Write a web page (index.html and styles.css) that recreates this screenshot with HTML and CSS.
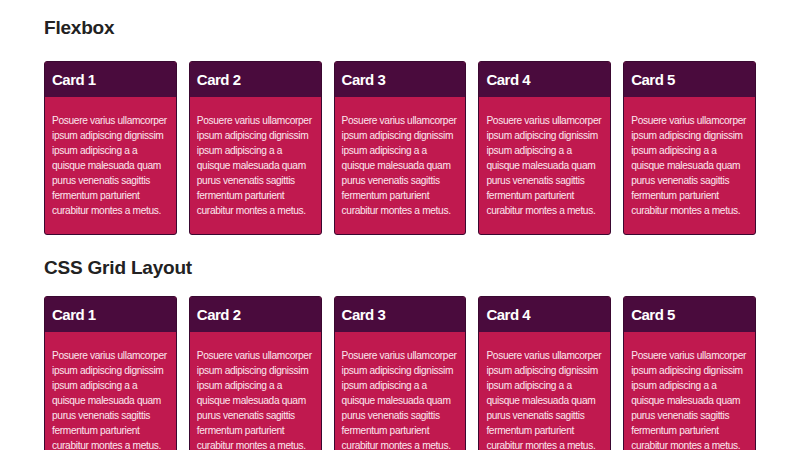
FILE: index.html
```html
<!DOCTYPE html>
<html lang="en">
<head>
<meta charset="utf-8">
<title>Flexbox and Grid</title>
<link rel="stylesheet" href="styles.css">
</head>
<body>
  <main class="page">
    <section class="demo">
      <h2 class="demo-title">Flexbox</h2>
      <div class="cards cards-flex">
        <article class="card"><h3 class="card-head">Card 1</h3><p class="card-body">Posuere varius ullamcorper ipsum adipiscing dignissim ipsum adipiscing a a quisque malesuada quam purus venenatis sagittis fermentum parturient curabitur montes a metus.</p></article>
        <article class="card"><h3 class="card-head">Card 2</h3><p class="card-body">Posuere varius ullamcorper ipsum adipiscing dignissim ipsum adipiscing a a quisque malesuada quam purus venenatis sagittis fermentum parturient curabitur montes a metus.</p></article>
        <article class="card"><h3 class="card-head">Card 3</h3><p class="card-body">Posuere varius ullamcorper ipsum adipiscing dignissim ipsum adipiscing a a quisque malesuada quam purus venenatis sagittis fermentum parturient curabitur montes a metus.</p></article>
        <article class="card"><h3 class="card-head">Card 4</h3><p class="card-body">Posuere varius ullamcorper ipsum adipiscing dignissim ipsum adipiscing a a quisque malesuada quam purus venenatis sagittis fermentum parturient curabitur montes a metus.</p></article>
        <article class="card"><h3 class="card-head">Card 5</h3><p class="card-body">Posuere varius ullamcorper ipsum adipiscing dignissim ipsum adipiscing a a quisque malesuada quam purus venenatis sagittis fermentum parturient curabitur montes a metus.</p></article>
      </div>
    </section>
    <section class="demo demo-grid">
      <h2 class="demo-title">CSS Grid Layout</h2>
      <div class="cards cards-grid">
        <article class="card"><h3 class="card-head">Card 1</h3><p class="card-body">Posuere varius ullamcorper ipsum adipiscing dignissim ipsum adipiscing a a quisque malesuada quam purus venenatis sagittis fermentum parturient curabitur montes a metus.</p></article>
        <article class="card"><h3 class="card-head">Card 2</h3><p class="card-body">Posuere varius ullamcorper ipsum adipiscing dignissim ipsum adipiscing a a quisque malesuada quam purus venenatis sagittis fermentum parturient curabitur montes a metus.</p></article>
        <article class="card"><h3 class="card-head">Card 3</h3><p class="card-body">Posuere varius ullamcorper ipsum adipiscing dignissim ipsum adipiscing a a quisque malesuada quam purus venenatis sagittis fermentum parturient curabitur montes a metus.</p></article>
        <article class="card"><h3 class="card-head">Card 4</h3><p class="card-body">Posuere varius ullamcorper ipsum adipiscing dignissim ipsum adipiscing a a quisque malesuada quam purus venenatis sagittis fermentum parturient curabitur montes a metus.</p></article>
        <article class="card"><h3 class="card-head">Card 5</h3><p class="card-body">Posuere varius ullamcorper ipsum adipiscing dignissim ipsum adipiscing a a quisque malesuada quam purus venenatis sagittis fermentum parturient curabitur montes a metus.</p></article>
      </div>
    </section>
  </main>
</body>
</html>
```

FILE: styles.css
```css
html, body {
  margin: 0;
  padding: 0;
  background: #ffffff;
}

body {
  font-family: "Liberation Sans", Arial, sans-serif;
  color: #222222;
}

.page {
  width: 712px;
  padding: 16px 0 0 44px;
}

.demo-title {
  margin: 0;
  font-size: 19px;
  line-height: 23px;
  font-weight: bold;
  letter-spacing: -0.2px;
  color: #222222;
}

.demo .cards {
  margin-top: 22px;
}

.demo-grid {
  margin-top: 21px;
}

.demo-grid .cards {
  margin-top: 17px;
}

.cards-flex {
  display: flex;
  gap: 12px;
}

.cards-flex .card {
  flex: 1 1 0;
}

.cards-grid {
  display: grid;
  grid-template-columns: repeat(5, 1fr);
  gap: 12px;
}

.card {
  border: 1px solid #3a0830;
  border-radius: 3px;
  overflow: hidden;
  background: #c0194f;
}

.card-head {
  margin: 0;
  height: 35px;
  padding: 0 7px;
  display: flex;
  align-items: center;
  background: #4a0b3d;
  color: #ffffff;
  font-size: 15px;
  font-weight: bold;
  letter-spacing: -0.5px;
}

.card-body {
  margin: 0;
  padding: 16px 7px 16px;
  font-size: 10.2px;
  line-height: 15px;
  letter-spacing: -0.35px;
  color: #fbe6ee;
}
```
